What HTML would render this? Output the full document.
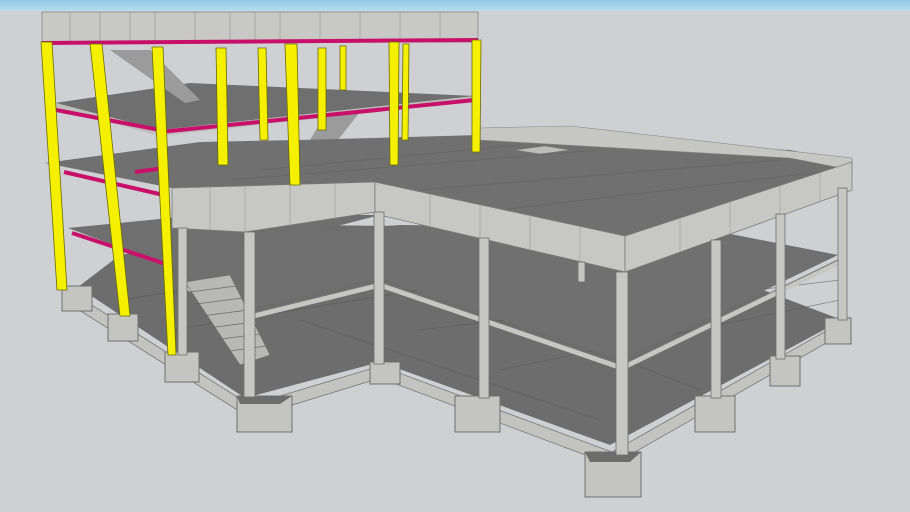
<!DOCTYPE html>
<html><head><meta charset="utf-8"><style>
html,body{margin:0;padding:0;width:910px;height:512px;overflow:hidden;background:#cfd0d4}
svg{display:block}
</style></head><body>
<svg width="910" height="512" viewBox="0 0 910 512" xmlns="http://www.w3.org/2000/svg">
<defs>
<linearGradient id="sky" x1="0" y1="0" x2="0" y2="1"><stop offset="0" stop-color="#8ec8e6"/><stop offset="1" stop-color="#b9dcec"/></linearGradient>
</defs>
<rect width="910" height="512" fill="#cfd0d4"/>
<rect width="910" height="11" fill="url(#sky)"/>

<!-- ground slab -->
<polygon points="78,287 245,398 380,362 610,445 842,320 600,228 300,225 120,255" fill="#6c6d6c"/>
<g stroke="#555" stroke-width="0.8" opacity="0.6">
<line x1="120" y1="300" x2="380" y2="260"/><line x1="170" y1="330" x2="420" y2="290"/>
<line x1="420" y1="330" x2="840" y2="280"/><line x1="500" y1="370" x2="840" y2="300"/>
<line x1="300" y1="320" x2="600" y2="420"/><line x1="420" y1="280" x2="700" y2="390"/>
</g>
<!-- plinth beams -->
<g fill="#c3c4c0" stroke="#777" stroke-width="0.8">
<polygon points="68,290 250,405 250,418 68,303"/>
<polygon points="250,405 380,366 380,378 250,418"/>
<polygon points="380,366 612,452 612,465 380,378"/>
<polygon points="612,452 842,322 842,334 612,465"/>
</g>
<!-- footings -->
<g fill="#c4c5c1" stroke="#6f6f6f" stroke-width="1">
<rect x="62" y="286" width="30" height="25"/>
<rect x="108" y="314" width="30" height="27"/>
<rect x="165" y="352" width="34" height="30"/>
<rect x="237" y="396" width="55" height="36"/>
<rect x="370" y="362" width="30" height="22"/>
<rect x="455" y="396" width="45" height="36"/>
<rect x="585" y="452" width="56" height="45"/>
<rect x="695" y="396" width="40" height="36"/>
<rect x="770" y="356" width="30" height="30"/>
<rect x="825" y="318" width="26" height="26"/>
</g>
<g fill="#6c6d6c"><polygon points="237,396 292,396 280,404 240,404"/><polygon points="585,452 641,452 630,462 590,462"/></g>

<!-- first floor slab -->
<polygon points="185,275 245,310 380,278 620,360 838,255 700,228 400,225 200,240" fill="#6f706f"/>
<g stroke="#c6c7c3" stroke-width="5" fill="none">
<polyline points="183,285 245,318 380,285 622,368 840,262"/>
</g>
<g stroke="#777" stroke-width="1" fill="none">
<polyline points="183,282 245,315 380,282 622,365 840,259"/>
</g>

<!-- tower floors -->
<polygon points="55,103 190,83 475,96 160,130" fill="#6e6f6e"/>
<polygon points="56,103 160,130 160,136 56,108" fill="#bdbeba"/>
<polygon points="160,130 475,96 475,101 160,136" fill="#bdbeba"/>
<polygon points="68,228 200,215 380,215 175,268" fill="#6e6f6e"/>

<!-- tower top parapet -->
<rect x="42" y="12" width="436" height="30" fill="#c8c9c5" stroke="#888" stroke-width="0.8"/>
<g stroke="#999" stroke-width="0.7">
<line x1="70" y1="12" x2="70" y2="42"/><line x1="100" y1="12" x2="100" y2="42"/><line x1="130" y1="12" x2="130" y2="42"/>
<line x1="155" y1="12" x2="155" y2="42"/><line x1="195" y1="12" x2="195" y2="42"/><line x1="230" y1="12" x2="230" y2="42"/>
<line x1="255" y1="12" x2="255" y2="42"/><line x1="280" y1="12" x2="280" y2="42"/><line x1="320" y1="12" x2="320" y2="42"/>
<line x1="360" y1="12" x2="360" y2="42"/><line x1="400" y1="12" x2="400" y2="42"/><line x1="440" y1="12" x2="440" y2="42"/>
</g>
<!-- stairs upper -->
<polygon points="110,50 150,50 200,100 185,103" fill="#9a9b9a"/>
<polygon points="310,140 325,115 360,112 330,150" fill="#9a9b9a"/>

<!-- right roof + tower 3rd floor -->
<polygon points="45,163 172,188 375,182 625,236 852,162 790,150 480,135 300,140 200,142" fill="#6f706f"/>
<g stroke="#5d5e5d" stroke-width="0.6" opacity="0.7">
<line x1="230" y1="180" x2="600" y2="150"/><line x1="420" y1="190" x2="780" y2="160"/>
<line x1="500" y1="210" x2="820" y2="172"/><line x1="260" y1="170" x2="520" y2="145"/>
</g>
<!-- back parapet -->
<polygon points="480,128 570,126 852,158 852,170 790,158 480,140" fill="#c6c7c3" stroke="#888" stroke-width="0.6"/>
<polygon points="515,150 545,146 570,150 540,154" fill="#bdbdb9" stroke="#777" stroke-width="0.6"/>
<!-- front parapet faces -->
<g fill="#c7c8c4" stroke="#7a7a7a" stroke-width="0.8">
<polygon points="172,188 375,182 375,212 245,232 172,228"/>
<polygon points="375,182 625,236 625,272 375,214"/>
<polygon points="625,236 852,162 852,190 625,272"/>
</g>
<g stroke="#999" stroke-width="0.6">
<line x1="210" y1="187" x2="210" y2="230"/><line x1="245" y1="186" x2="245" y2="232"/><line x1="290" y1="185" x2="290" y2="226"/><line x1="335" y1="183" x2="335" y2="219"/>
<line x1="430" y1="194" x2="430" y2="227"/><line x1="480" y1="205" x2="480" y2="238"/><line x1="530" y1="215" x2="530" y2="250"/><line x1="580" y1="226" x2="580" y2="261"/>
<line x1="680" y1="218" x2="680" y2="252"/><line x1="730" y1="202" x2="730" y2="235"/><line x1="780" y1="186" x2="780" y2="217"/><line x1="820" y1="173" x2="820" y2="202"/>
</g>

<!-- magenta beams -->
<g stroke="#c8106a" stroke-width="4" fill="none">
<line x1="42" y1="43" x2="478" y2="40"/>
<line x1="56" y1="110" x2="160" y2="130"/>
<line x1="160" y1="132" x2="475" y2="100"/>
<line x1="64" y1="172" x2="168" y2="196"/>
<line x1="72" y1="233" x2="172" y2="266"/>
<line x1="135" y1="172" x2="165" y2="168"/>
</g>

<!-- yellow columns -->
<g fill="#f4f000" stroke="#6b6b00" stroke-width="0.8">
<polygon points="216,48 226,48 228,165 218,165"/>
<polygon points="258,48 266,48 268,140 260,140"/>
<polygon points="318,48 326,48 326,130 318,130"/>
<polygon points="340,46 346,46 346,90 340,90"/>
<polygon points="403,44 409,44 408,140 402,140"/>
<polygon points="285,44 297,44 300,185 290,185"/>
<polygon points="389,42 399,42 398,165 390,165"/>
<polygon points="472,40 481,40 480,152 472,152"/>
<polygon points="41,42 52,42 67,290 57,290"/>
<polygon points="90,44 102,44 130,316 120,316"/>
<polygon points="152,47 163,47 176,355 168,355"/>
</g>

<!-- stairs lower -->
<g fill="#b8b9b5" stroke="#6a6a6a" stroke-width="0.6">
<polygon points="185,282 230,275 270,355 240,365"/>
</g>
<g stroke="#6a6a6a" stroke-width="0.7">
<line x1="190" y1="292" x2="236" y2="286"/><line x1="196" y1="304" x2="242" y2="298"/><line x1="202" y1="316" x2="248" y2="310"/>
<line x1="208" y1="328" x2="254" y2="322"/><line x1="214" y1="340" x2="260" y2="334"/><line x1="222" y1="352" x2="266" y2="346"/>
</g>

<!-- concrete columns -->
<g fill="#c6c7c3" stroke="#6e6e6e" stroke-width="0.8">
<rect x="178" y="228" width="9" height="127"/>
<rect x="244" y="232" width="11" height="165"/>
<rect x="374" y="212" width="10" height="152"/>
<rect x="479" y="238" width="10" height="160"/>
<rect x="616" y="272" width="12" height="183"/>
<rect x="711" y="240" width="10" height="158"/>
<rect x="776" y="214" width="9" height="145"/>
<rect x="838" y="188" width="9" height="132"/>
<rect x="578" y="262" width="7" height="20"/>
</g>
</svg>
</body></html>
